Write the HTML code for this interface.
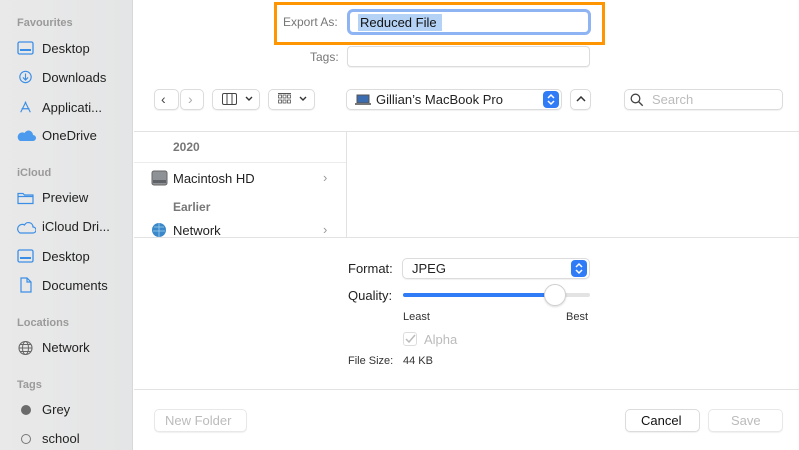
<!DOCTYPE html>
<html><head><meta charset="utf-8"><style>
*{margin:0;padding:0;box-sizing:border-box}
body{width:799px;height:450px;overflow:hidden;background:#fff;font-family:"Liberation Sans",sans-serif;font-size:13px;color:#222;position:relative}
.a{position:absolute}
.side{left:0;top:0;width:133px;height:450px;background:linear-gradient(90deg,#e9e9e9,#e4e5e6);border-right:1px solid #d8d8d8}
.h{left:17px;font-size:11px;color:#9a9a9a;font-weight:bold}
.it{left:42px;font-size:13px;color:#222}
.ic{left:17px;width:17px;height:14px}
.btn{background:#fff;border:1px solid #dcdcdc;border-radius:5px;box-shadow:0 1px 1px rgba(0,0,0,.06)}
.lbl{font-size:12px;color:#333}
</style></head><body>
<div class="a side"></div>
<div class="a h" style="top:17px">Favourites</div>
<svg class="a ic" style="top:41px" viewBox="0 0 17 14"><rect x="1" y="1" width="15" height="12" rx="1.5" fill="none" stroke="#3b8ee6" stroke-width="1.3"/><rect x="3" y="8" width="11" height="2" fill="#3b8ee6"/></svg>
<div class="a it" style="top:41px">Desktop</div>
<svg class="a ic" style="top:70px" viewBox="0 0 17 16"><circle cx="8.5" cy="8" r="6.5" fill="none" stroke="#3b8ee6" stroke-width="1.3"/><path d="M8.5 4v7M5.5 8.5l3 3 3-3" fill="none" stroke="#3b8ee6" stroke-width="1.3"/></svg>
<div class="a it" style="top:70px">Downloads</div>
<svg class="a ic" style="top:100px" viewBox="0 0 17 16"><path d="M3 14L9 2M14 14L8 2M4 10h9" fill="none" stroke="#3b8ee6" stroke-width="1.3"/></svg>
<div class="a it" style="top:100px">Applicati...</div>
<svg class="a ic" style="top:128px;width:20px;left:16px" viewBox="0 0 20 14"><path d="M4 13h13a3 3 0 0 0 0-6 4.5 4.5 0 0 0-8.5-2A4 4 0 0 0 4 13z" fill="#4b9aee"/></svg>
<div class="a it" style="top:128px">OneDrive</div>
<div class="a h" style="top:167px">iCloud</div>
<svg class="a ic" style="top:191px" viewBox="0 0 17 14"><path d="M1 2.5h5l1.5 1.5h8.5v8.5h-15z M1 5.5h15" fill="none" stroke="#3b8ee6" stroke-width="1.2"/></svg>
<div class="a it" style="top:190px">Preview</div>
<svg class="a ic" style="top:220px;width:20px;left:16px" viewBox="0 0 20 14"><path d="M4 13h13a3 3 0 0 0 0-6 4.5 4.5 0 0 0-8.5-2A4 4 0 0 0 4 13z" fill="none" stroke="#3b8ee6" stroke-width="1.2"/></svg>
<div class="a it" style="top:219px">iCloud Dri...</div>
<svg class="a ic" style="top:249px" viewBox="0 0 17 14"><rect x="1" y="1" width="15" height="12" rx="1.5" fill="none" stroke="#3b8ee6" stroke-width="1.3"/><rect x="3" y="8" width="11" height="2" fill="#3b8ee6"/></svg>
<div class="a it" style="top:249px">Desktop</div>
<svg class="a ic" style="top:277px;height:16px" viewBox="0 0 17 16"><path d="M4 1h6l4 4v10H4z M10 1v4h4" fill="none" stroke="#3b8ee6" stroke-width="1.2"/></svg>
<div class="a it" style="top:278px">Documents</div>
<div class="a h" style="top:317px">Locations</div>
<svg class="a ic" style="top:340px;height:16px" viewBox="0 0 16 16"><circle cx="8" cy="8" r="6.5" fill="none" stroke="#666" stroke-width="1.1"/><ellipse cx="8" cy="8" rx="3" ry="6.5" fill="none" stroke="#666"/><path d="M1.5 8h13M3 4.5h10M3 11.5h10" stroke="#666"/></svg>
<div class="a it" style="top:340px">Network</div>
<div class="a h" style="top:379px">Tags</div>
<div class="a" style="left:21px;top:405px;width:10px;height:10px;border-radius:50%;background:#6b6b6b"></div>
<div class="a it" style="top:402px">Grey</div>
<div class="a" style="left:21px;top:434px;width:10px;height:10px;border-radius:50%;border:1px solid #777"></div>
<div class="a it" style="top:431px">school</div>

<div class="a" style="left:274px;top:2px;width:331px;height:43px;border:3px solid #ff9500"></div>
<div class="a lbl" style="left:283px;top:15px;color:#777">Export As:</div>
<div class="a" style="left:347px;top:9px;width:244px;height:26px;border:3px solid #8fb4f3;border-radius:6px;background:#fff"></div>
<div class="a" style="left:358px;top:14px;width:84px;height:17px;background:#b3d2f5"></div>
<div class="a" style="left:360px;top:15px;font-size:13px;color:#111">Reduced File</div>
<div class="a lbl" style="left:310px;top:50px;color:#777">Tags:</div>
<div class="a btn" style="left:347px;top:46px;width:243px;height:21px;border-radius:4px"></div>

<div class="a btn" style="left:154px;top:89px;width:25px;height:21px"></div>
<div class="a btn" style="left:180px;top:89px;width:24px;height:21px"></div>
<div class="a" style="left:161px;top:91px;font-size:14px;color:#444">&#8249;</div>
<div class="a" style="left:188px;top:91px;font-size:14px;color:#aaa">&#8250;</div>
<div class="a btn" style="left:212px;top:89px;width:48px;height:21px"></div>
<svg class="a" style="left:222px;top:93px" width="34" height="12" viewBox="0 0 34 12"><rect x=".5" y=".5" width="14" height="11" rx="1.5" fill="none" stroke="#444"/><path d="M5 1v10M10 1v10" stroke="#444"/><path d="M24 4l3 3 3-3" fill="none" stroke="#333" stroke-width="1.4"/></svg>
<div class="a btn" style="left:268px;top:89px;width:47px;height:21px"></div>
<svg class="a" style="left:278px;top:93px" width="34" height="12" viewBox="0 0 34 12"><g fill="none" stroke="#555" stroke-width=".8"><rect x=".5" y="2" width="3" height="3"/><rect x="5" y="2" width="3" height="3"/><rect x="9.5" y="2" width="3" height="3"/><rect x=".5" y="7" width="3" height="3"/><rect x="5" y="7" width="3" height="3"/><rect x="9.5" y="7" width="3" height="3"/></g><path d="M0 .5h13" stroke="#555"/><path d="M22 4l3 3 3-3" fill="none" stroke="#333" stroke-width="1.4"/></svg>
<div class="a btn" style="left:346px;top:89px;width:216px;height:21px"></div>
<svg class="a" style="left:355px;top:94px" width="16" height="11"><rect x="2" y="1" width="12" height="8" fill="#3c6db0" stroke="#555"/><rect x="0" y="9" width="16" height="2" fill="#777"/></svg>
<div class="a" style="left:376px;top:92px;font-size:13px">Gillian’s MacBook Pro</div>
<div class="a" style="left:543px;top:91px;width:16px;height:17px;background:#2f7cf6;border-radius:4px"></div>
<svg class="a" style="left:545px;top:93px" width="12" height="13"><path d="M3 5l3-3 3 3M3 8l3 3 3-3" fill="none" stroke="#fff" stroke-width="1.5"/></svg>
<div class="a btn" style="left:570px;top:89px;width:21px;height:21px"></div>
<svg class="a" style="left:576px;top:96px" width="10" height="6"><path d="M1 5l4-4 4 4" fill="none" stroke="#333" stroke-width="1.5"/></svg>
<div class="a btn" style="left:624px;top:89px;width:159px;height:21px"></div>
<svg class="a" style="left:630px;top:93px" width="14" height="14"><circle cx="5.5" cy="5.5" r="4.3" fill="none" stroke="#444" stroke-width="1.3"/><path d="M8.7 8.7l4 4" stroke="#444" stroke-width="1.4"/></svg>
<div class="a" style="left:652px;top:92px;font-size:13px;color:#bbb">Search</div>

<div class="a" style="left:134px;top:131px;width:665px;height:1px;background:#e2e2e2"></div>
<div class="a" style="left:346px;top:131px;width:1px;height:106px;background:#e2e2e2"></div>
<div class="a" style="left:134px;top:162px;width:212px;height:1px;background:#ececec"></div>
<div class="a" style="left:134px;top:237px;width:665px;height:1px;background:#e2e2e2"></div>
<div class="a" style="left:173px;top:140px;font-size:12px;color:#777;font-weight:bold">2020</div>
<svg class="a" style="left:151px;top:170px" width="17" height="16"><rect x="1" y="1" width="15" height="14" rx="2" fill="#8e9196" stroke="#666"/><rect x="2" y="10" width="13" height="3" fill="#5f6266"/></svg>
<div class="a" style="left:173px;top:171px">Macintosh HD</div>
<div class="a" style="left:323px;top:170px;color:#999">&#8250;</div>
<div class="a" style="left:173px;top:200px;font-size:12px;color:#777;font-weight:bold">Earlier</div>
<svg class="a" style="left:151px;top:222px" width="16" height="16"><circle cx="8" cy="8" r="7" fill="#3a88c9"/><path d="M3 5h10M2 9h12M8 1v14" stroke="#9fd0ee" stroke-width=".8"/></svg>
<div class="a" style="left:173px;top:223px">Network</div>
<div class="a" style="left:323px;top:222px;color:#999">&#8250;</div>

<div class="a" style="left:348px;top:261px;font-size:13px">Format:</div>
<div class="a btn" style="left:402px;top:258px;width:188px;height:21px"></div>
<div class="a" style="left:412px;top:261px;font-size:13px">JPEG</div>
<div class="a" style="left:571px;top:260px;width:16px;height:17px;background:#2f7cf6;border-radius:4px"></div>
<svg class="a" style="left:573px;top:262px" width="12" height="13"><path d="M3 5l3-3 3 3M3 8l3 3 3-3" fill="none" stroke="#fff" stroke-width="1.5"/></svg>
<div class="a" style="left:348px;top:288px;font-size:13px">Quality:</div>
<div class="a" style="left:403px;top:293px;width:187px;height:4px;background:#e3e3e3;border-radius:2px"></div>
<div class="a" style="left:403px;top:293px;width:152px;height:4px;background:#2f7cf6;border-radius:2px"></div>
<div class="a" style="left:544px;top:284px;width:22px;height:22px;border-radius:50%;background:#fff;border:1px solid #d0d0d0;box-shadow:0 1px 2px rgba(0,0,0,.15)"></div>
<div class="a" style="left:403px;top:311px;font-size:11px;color:#333">Least</div>
<div class="a" style="left:566px;top:311px;font-size:11px;color:#333">Best</div>
<div class="a" style="left:403px;top:332px;width:14px;height:14px;border:1px solid #ddd;border-radius:3px"></div>
<svg class="a" style="left:405px;top:334px" width="11" height="10"><path d="M1 5l3 3 6-7" fill="none" stroke="#bbb" stroke-width="1.5"/></svg>
<div class="a" style="left:424px;top:332px;font-size:13px;color:#bbb">Alpha</div>
<div class="a" style="left:348px;top:355px;font-size:11px;color:#333">File Size:</div>
<div class="a" style="left:403px;top:355px;font-size:11px;color:#333">44 KB</div>

<div class="a" style="left:134px;top:389px;width:665px;height:1px;background:#e2e2e2"></div>
<div class="a btn" style="left:154px;top:409px;width:93px;height:23px;border-color:#e8e8e8"></div>
<div class="a" style="left:165px;top:413px;color:#bbb">New Folder</div>
<div class="a btn" style="left:625px;top:409px;width:75px;height:23px"></div>
<div class="a" style="left:641px;top:413px;color:#111">Cancel</div>
<div class="a btn" style="left:708px;top:409px;width:75px;height:23px;border-color:#e8e8e8"></div>
<div class="a" style="left:731px;top:413px;color:#bbb">Save</div>
</body></html>
